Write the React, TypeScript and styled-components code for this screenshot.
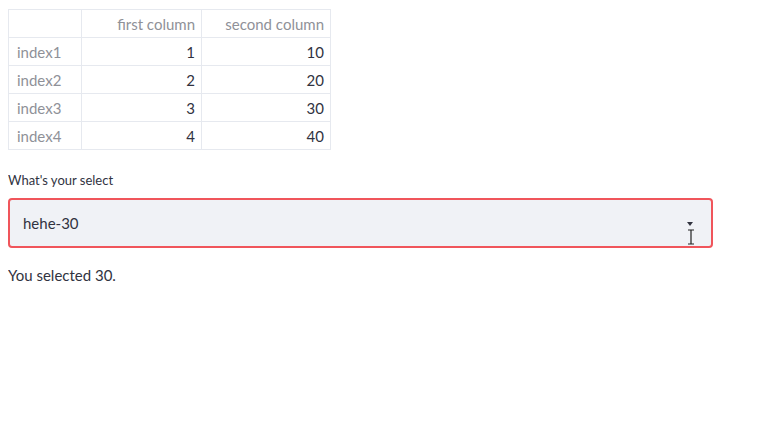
import React from "react";
import styled, {createGlobalStyle} from "styled-components";

const GlobalStyle = createGlobalStyle`
  body {
    margin: 8px;
    background: #ffffff;
    font-family: "Lato", "Noto Sans", sans-serif;
    color: #31333f;
  }
`

const Page = styled.div`
  width: 705px;
  display: flex;
  flex-direction: column;
`

const Table = styled.table`
  border-collapse: collapse;
  table-layout: fixed;
  width: 322px;
  margin-top: 1px;
  font-size: 15px;
`

const Col = styled.col<{ $width: number }>`
  width: ${p => p.$width}px;
`

const Cell = styled.td<{ $muted?: boolean; $align?: string }>`
  border: 1px solid #e6e9ef;
  height: 27px;
  padding: 0 6px 0 8px;
  text-align: ${p => p.$align || "right"};
  color: ${p => (p.$muted ? "#8f9198" : "#31333f")};
  white-space: nowrap;
`

const Label = styled.div`
  margin-top: 21px;
  font-size: 13px;
  height: 18px;
  line-height: 18px;
`

const SelectBox = styled.div`
  margin-top: 9px;
  height: 46px;
  border: 2px solid #f0555b;
  border-radius: 4px;
  background: #f0f2f6;
  display: flex;
  align-items: center;
  justify-content: space-between;
  padding: 0 18px 0 13px;
  font-size: 15px;
  position: relative;
`

const Arrow = styled.div`
  width: 0;
  height: 0;
  border-left: 3.5px solid transparent;
  border-right: 3.5px solid transparent;
  border-top: 4px solid #31333f;
  margin-top: 2px;
`

const Cursor = styled.svg`
  position: absolute;
  right: 16px;
  top: 29px;
`

const Result = styled.div`
  margin-top: 18px;
  font-size: 15px;
`

const rows = [
    {id: "index1", a: 1, b: 10},
    {id: "index2", a: 2, b: 20},
    {id: "index3", a: 3, b: 30},
    {id: "index4", a: 4, b: 40},
]

const App = () => {
    return (
        <Page>
            <GlobalStyle/>
            <Table>
                <colgroup>
                    <Col $width={73}/>
                    <Col $width={120}/>
                    <Col $width={129}/>
                </colgroup>
                <tbody>
                <tr>
                    <Cell></Cell>
                    <Cell $muted>first column</Cell>
                    <Cell $muted>second column</Cell>
                </tr>
                {rows.map(row => (
                    <tr key={row.id}>
                        <Cell $muted $align="left">{row.id}</Cell>
                        <Cell>{row.a}</Cell>
                        <Cell>{row.b}</Cell>
                    </tr>
                ))}
                </tbody>
            </Table>
            <Label>What's your select</Label>
            <SelectBox>
                <span>hehe-30</span>
                <Arrow/>
                <Cursor width="8" height="16" viewBox="0 0 8 16">
                    <path d="M1 1h6M4 1v14M1 15h6" stroke="#222" strokeWidth="1.2" fill="none"/>
                </Cursor>
            </SelectBox>
            <Result>You selected 30.</Result>
        </Page>
    )
}

export default App
